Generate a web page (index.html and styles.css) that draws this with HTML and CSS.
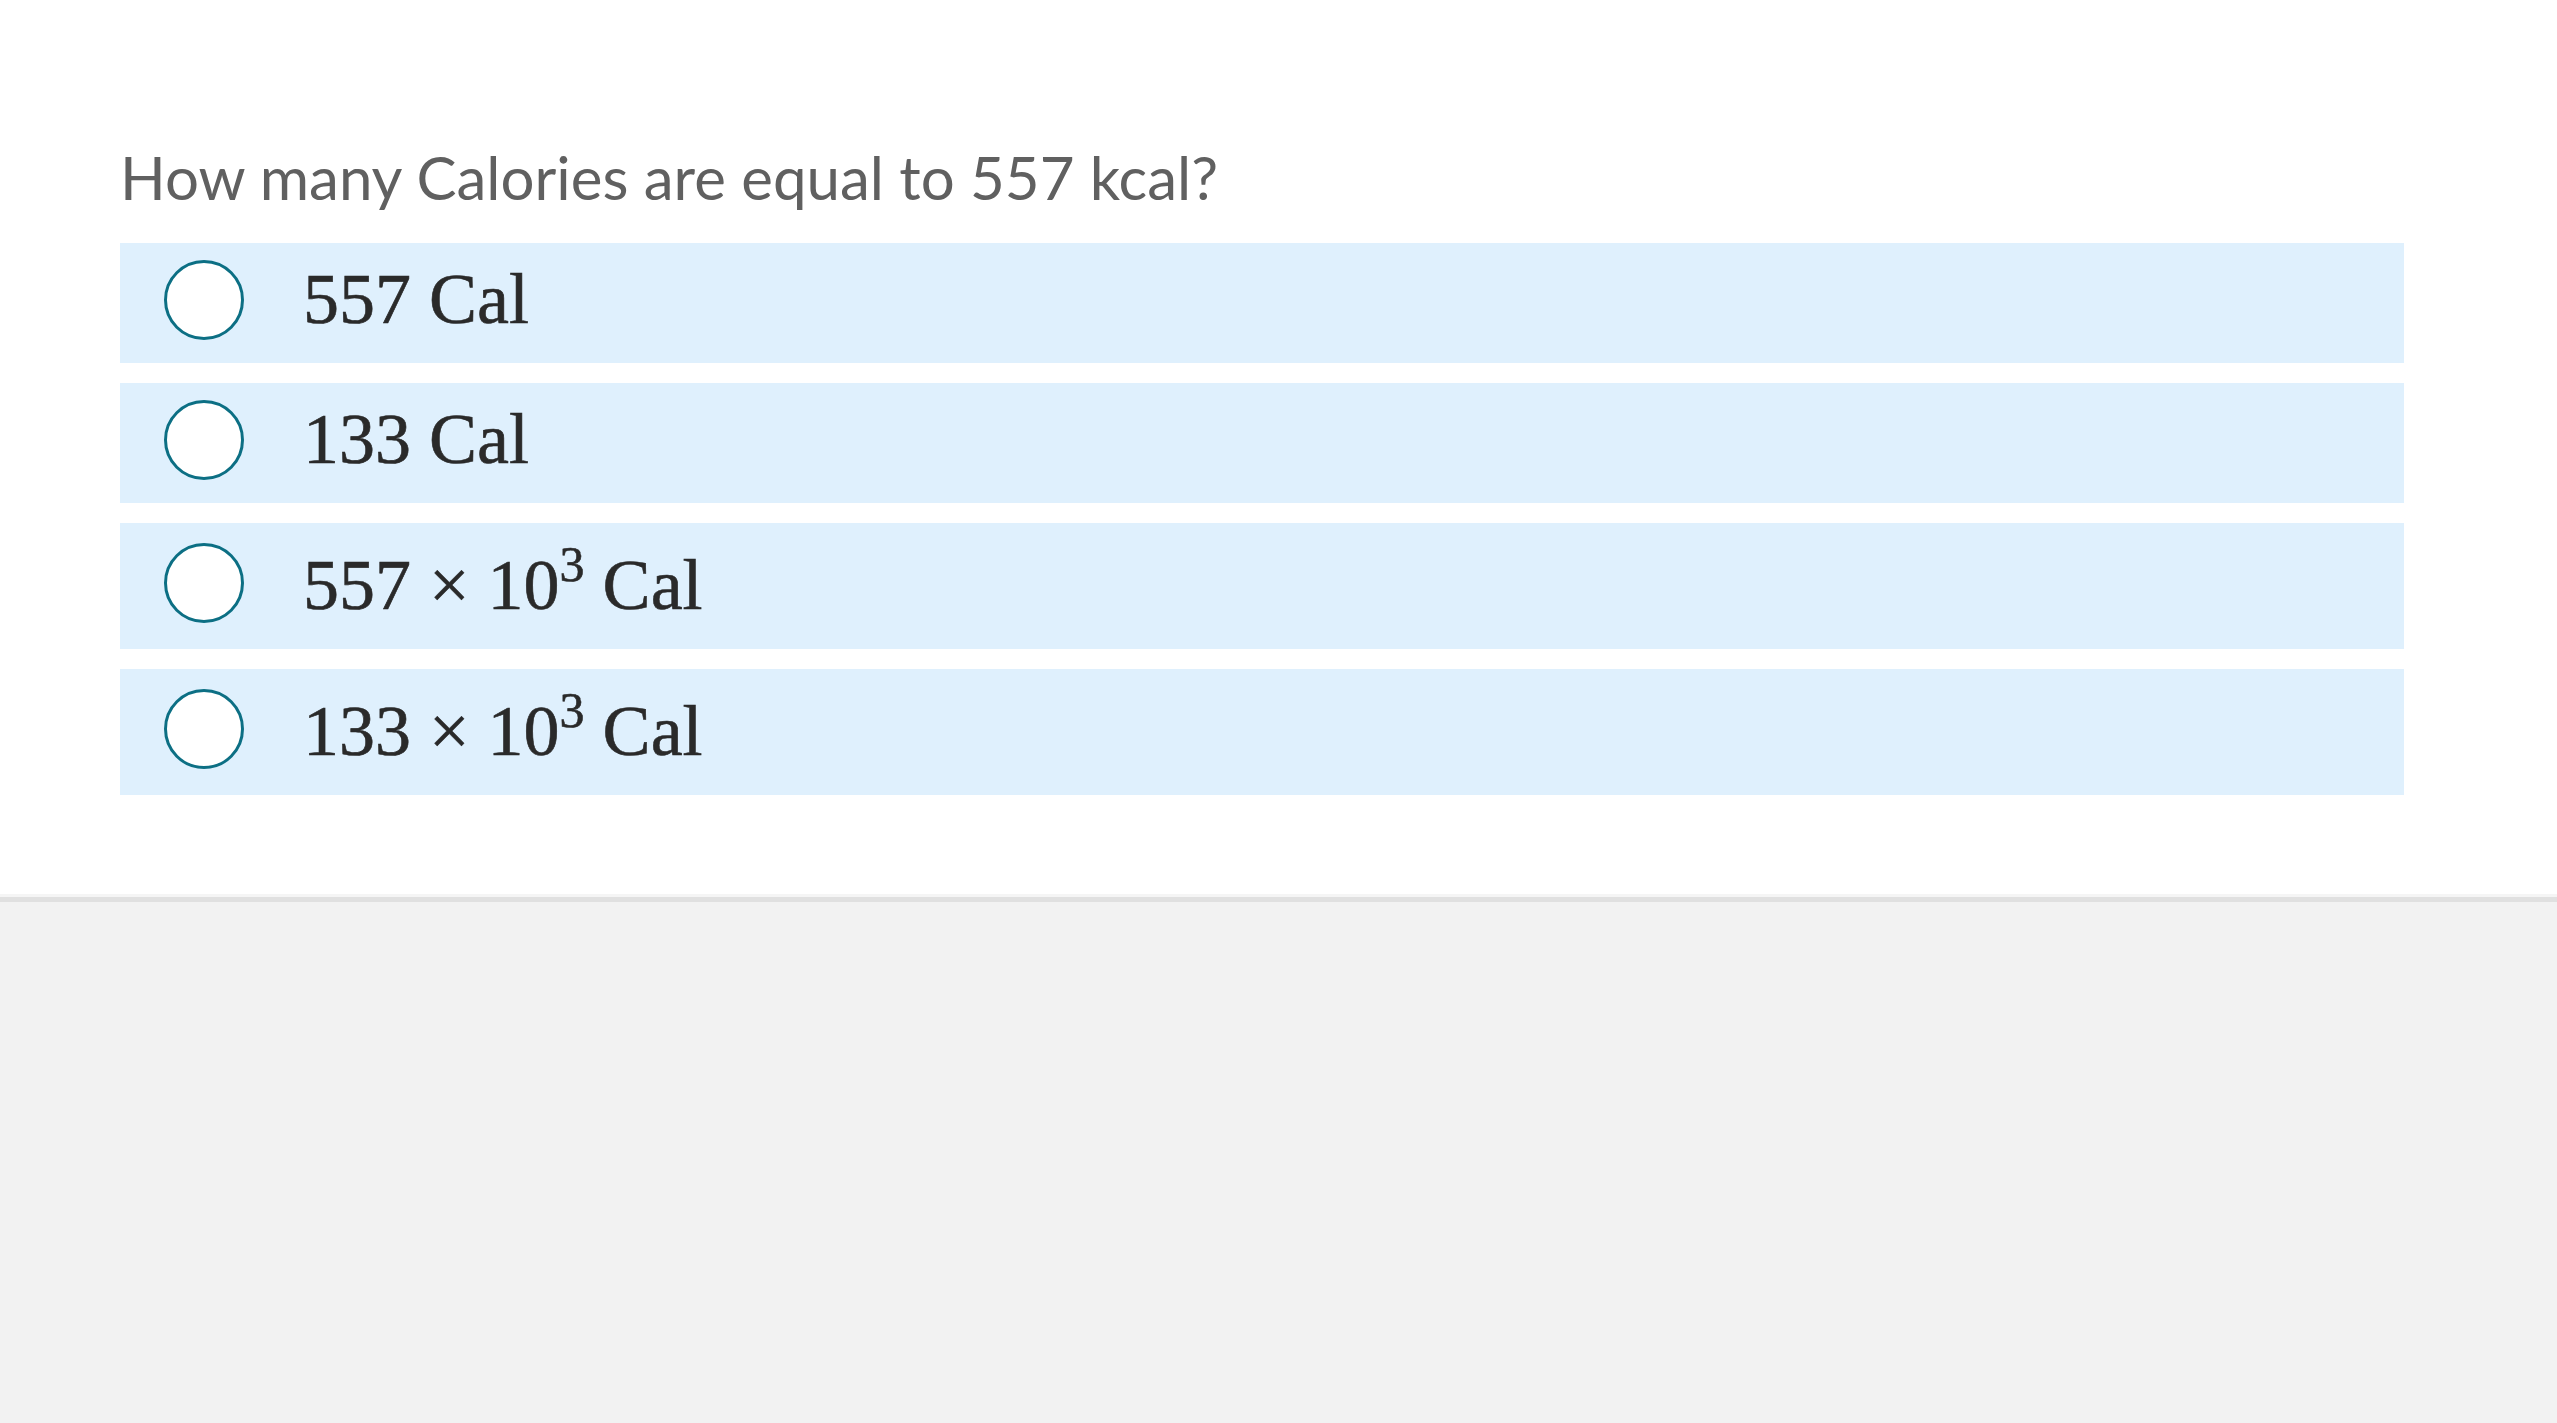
FILE: index.html
```html
<!DOCTYPE html>
<html lang="en">
<head>
<meta charset="utf-8">
<title>Question</title>
<link rel="stylesheet" href="styles.css">
</head>
<body>
<main class="page">
  <section class="question">
    <h1 class="prompt">How many Calories are equal to 557 kcal?</h1>
    <div class="options">
      <label class="option"><span class="radio"></span><span class="answer">557 Cal</span></label>
      <label class="option"><span class="radio"></span><span class="answer">133 Cal</span></label>
      <label class="option"><span class="radio"></span><span class="answer">557 × 10<span class="sup">3</span> Cal</span></label>
      <label class="option"><span class="radio"></span><span class="answer">133 × 10<span class="sup">3</span> Cal</span></label>
    </div>
  </section>
  <footer class="footer"></footer>
</main>
</body>
</html>
```
FILE: styles.css
```css
html, body {
  margin: 0;
  padding: 0;
  height: 100%;
}
body {
  background: #f2f2f2;
  font-family: "Lato", "Open Sans", sans-serif;
}
.page {
  display: flex;
  flex-direction: column;
  min-height: 100%;
}
.question {
  background: #ffffff;
  padding: 141px 153px 0 120px;
  height: 897px;
  box-sizing: border-box;
  border-bottom: 3px solid #f5f5f5;
}
.prompt {
  margin: 0 0 30px 0;
  font-size: 60px;
  line-height: 72px;
  font-weight: 400;
  color: #606060;
}
.options {
  display: flex;
  flex-direction: column;
  gap: 20px;
}
.option {
  display: flex;
  align-items: center;
  background: #dff0fd;
  padding: 16px 0 23px 44px;
}
.radio {
  width: 80px;
  height: 80px;
  box-sizing: border-box;
  border: 3.5px solid #0c6f84;
  border-radius: 50%;
  background: #ffffff;
  flex: none;
  margin-right: 59px;
}
.answer {
  font-family: "Liberation Serif", "Times New Roman", serif;
  font-size: 72px;
  line-height: 81px;
  color: #2a2a2a;
  -webkit-text-stroke: 0.6px #2a2a2a;
}
.sup {
  font-size: 50px;
  line-height: 50px;
  vertical-align: 28px;
}
.footer {
  flex: 1;
  border-top: 5px solid #e0e0e0;
  background: #f2f2f2;
}
```
